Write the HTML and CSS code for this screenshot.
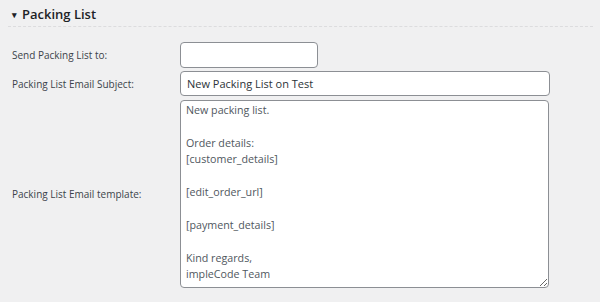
FILE: index.html
```html
<!DOCTYPE html>
<html lang="en">
<head>
  <meta charset="UTF-8">
  <title>Packing List</title>
  <link rel="stylesheet" href="styles.css">
</head>
<body>
<div class="settings-box">
  <h2 class="section-title"><span class="toggle">&#9662;</span>Packing List</h2>
  <div class="form-table">
    <label class="field-label" for="packingTo">Send Packing List to:</label>
    <div><input type="text" id="packingTo" class="input-short"></div>

    <label class="field-label" for="packingSubject">Packing List Email Subject:</label>
    <div><input type="text" id="packingSubject" class="input-wide" value="New Packing List on Test"></div>

    <label class="field-label" for="packingTemplate">Packing List Email template:</label>
    <div><textarea id="packingTemplate" class="input-area">New packing list.

Order details:
[customer_details]

[edit_order_url]

[payment_details]

Kind regards,
impleCode Team</textarea></div>
  </div>
</div>
</body>
</html>
```

FILE: styles.css
```css
body {
  margin: 0;
  background: #f0f0f1;
  font-family: "Open Sans", Arial, sans-serif;
  color: #3c434a;
}
.settings-box {
  padding: 5px 7px 0 8px;
}
.section-title {
  margin: 0;
  padding: 0 0 2px 4px;
  font-size: 13px;
  font-weight: 600;
  color: #1d2327;
  line-height: 19px;
  border-bottom: 1px dashed #dcdcde;
}
.toggle {
  display: inline-block;
  font-size: 9px;
  width: 10px;
  vertical-align: 1px;
}
.form-table {
  display: grid;
  grid-template-columns: 168px 1fr;
  align-items: center;
  row-gap: 3px;
  margin-top: 15px;
  padding-left: 4px;
}
.field-label {
  font-size: 10px;
  color: #3c434a;
}
input, textarea {
  display: block;
  box-sizing: border-box;
  font-family: "Open Sans", Arial, sans-serif;
  font-size: 11px;
  color: #2c3338;
  background: #fff;
  border: 1px solid #8c8f94;
  border-radius: 4px;
  margin: 0;
}
.input-short {
  width: 138px;
  height: 26px;
}
.input-wide {
  width: 370px;
  height: 25px;
  padding: 0 6px;
}
.input-area {
  width: 369px;
  height: 188px;
  margin-top: 1px;
  padding: 1px 5px;
  font-size: 10.7px;
  line-height: 16.4px;
  color: #50575e;
  resize: vertical;
}
```
